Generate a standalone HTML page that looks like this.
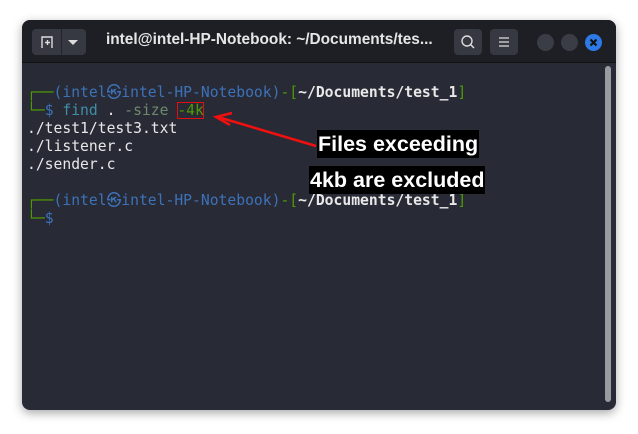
<!DOCTYPE html>
<html><head><meta charset="utf-8"><style>
body{margin:0;width:638px;height:434px;background:#fff;position:relative;overflow:hidden;font-family:"Liberation Sans",sans-serif}
.win{position:absolute;left:22px;top:20px;width:594px;height:390px;border-radius:8px;background:#282a35;box-shadow:0 3px 10px rgba(0,0,0,.35);overflow:hidden}
.tb{position:absolute;left:0;top:0;width:594px;height:42px;background:#1e1f25;border-bottom:1px solid #111}
.btn{position:absolute;top:9px;height:26px;background:#363842;border-radius:4px}
.title{position:absolute;left:84px;top:11px;color:#e6e6e6;font-weight:bold;font-size:15.4px;letter-spacing:0}
.circ{position:absolute;top:14px;width:17px;height:17px;border-radius:50%;background:#3a3c46}
.term{position:absolute;left:5px;top:64px;font-family:"DejaVu Sans Mono","Liberation Mono",monospace;font-size:14.7px;line-height:18px;color:#e8e8e8;white-space:pre}
.b{color:#3d72b8}.g{color:#4e9a06}.w{color:#e8e8e8;font-weight:bold}.t{color:#3f8fa8}.gr{color:#6f8a6a}
.sb{position:absolute;left:583px;top:46px;width:6px;height:336px;background:#9a9ba0;border-radius:3px}
.lab{position:absolute;background:#000;color:#fff;font-weight:bold;font-size:21.5px;line-height:28px;padding:0 1px}
</style></head><body>
<div class="win">
 <div class="tb">
  <div class="btn" style="left:10px;width:54px"></div>
  <div style="position:absolute;left:39px;top:9px;width:1px;height:26px;background:#24252c"></div>
  <svg style="position:absolute;left:16px;top:14px" width="16" height="16"><path d="M4 14V3h10v11M7 8.5h5M9.5 6v5" stroke="#ddd" stroke-width="1.4" fill="none"/></svg>
  <svg style="position:absolute;left:45px;top:19px" width="12" height="7"><path d="M1 1h10L6 6z" fill="#ddd"/></svg>
  <div class="title">intel@intel-HP-Notebook: ~/Documents/tes...</div>
  <div class="btn" style="left:432px;width:28px"></div>
  <svg style="position:absolute;left:438px;top:14px" width="16" height="16"><circle cx="7" cy="7" r="5" stroke="#ddd" stroke-width="1.4" fill="none"/><path d="M10.5 10.5L14 14" stroke="#ddd" stroke-width="1.5"/></svg>
  <div class="btn" style="left:468px;width:28px"></div>
  <svg style="position:absolute;left:476px;top:16px" width="12" height="12"><path d="M1 2h10M1 6h10M1 10h10" stroke="#ddd" stroke-width="1.2"/></svg>
  <div class="circ" style="left:515px"></div>
  <div class="circ" style="left:539px"></div>
  <div class="circ" style="left:563px;background:#2d7ae6"></div>
  <svg style="position:absolute;left:563px;top:14px" width="17" height="17"><path d="M5.5 5.5l6 6M11.5 5.5l-6 6" stroke="#111" stroke-width="2.2"/></svg>
 </div>
 <div class="term"><span class="g">┌──</span><span class="b">(intel㉿intel-HP-Notebook)</span><span class="g">-[</span><span class="w">~/Documents/test_1</span><span class="g">]</span>
<span class="g">└─</span><span class="b">$</span> <span class="t">find</span> <span class="w" style="font-weight:normal">.</span> <span class="gr">-size</span> <span class="g" style="outline:1.5px solid #e01010;outline-offset:-1px">-4k</span>
./test1/test3.txt
./listener.c
./sender.c

<span class="g">┌──</span><span class="b">(intel㉿intel-HP-Notebook)</span><span class="g">-[</span><span class="w">~/Documents/test_1</span><span class="g">]</span>
<span class="g">└─</span><span class="b">$</span></div>
 <div class="sb"></div>
</div>
<svg style="position:absolute;left:0;top:0" width="638" height="434"><path d="M316 146L218 117" stroke="#f01010" stroke-width="2.5"/><path d="M232 113L216 117L230 125" stroke="#f01010" stroke-width="2.5" fill="none"/></svg>
<div class="lab" style="left:317px;top:130px">Files exceeding</div>
<div class="lab" style="left:309px;top:166px">4kb are excluded</div>
</body></html>
